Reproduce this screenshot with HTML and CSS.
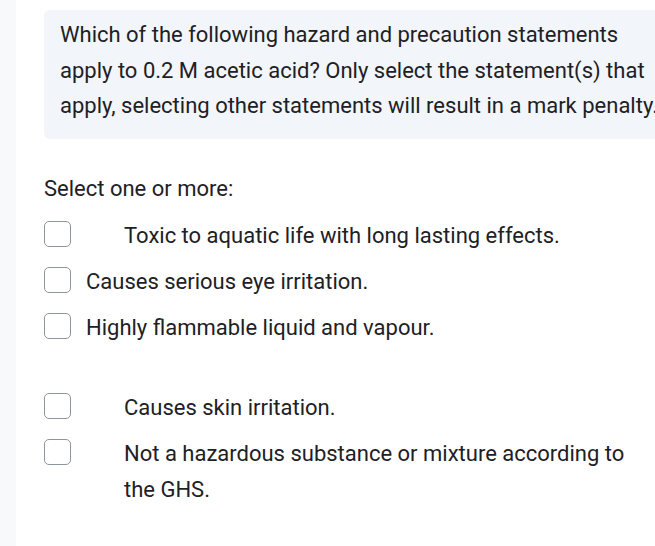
FILE: index.html
```html
<!DOCTYPE html>
<html lang="en">
<head>
<meta charset="utf-8">
<title>Question</title>
<link rel="stylesheet" href="styles.css">
</head>
<body>
<div class="page">
  <aside class="rail"></aside>
  <main class="content">
    <div class="qtext">
      <p>Which of the following hazard and precaution statements apply to 0.2 M acetic acid? Only select the statement(s) that apply, selecting other statements will result in a mark penalty.</p>
    </div>
    <div class="prompt">Select one or more:</div>
    <div class="answers">
      <label class="option">
        <span class="box"></span>
        <span class="label indent">Toxic to aquatic life with long lasting effects.</span>
      </label>
      <label class="option">
        <span class="box"></span>
        <span class="label">Causes serious eye irritation.</span>
      </label>
      <label class="option">
        <span class="box"></span>
        <span class="label">Highly flammable liquid and vapour.</span>
      </label>
      <label class="option spaced">
        <span class="box"></span>
        <span class="label indent">Causes skin irritation.</span>
      </label>
      <label class="option">
        <span class="box"></span>
        <span class="label indent">Not a hazardous substance or mixture according to the GHS.</span>
      </label>
    </div>
  </main>
</div>
</body>
</html>
```

FILE: styles.css
```css
html, body {
  margin: 0;
  padding: 0;
  background: #ffffff;
  overflow: hidden;
}

.page {
  display: flex;
  min-height: 546px;
  font-family: Roboto, "Liberation Sans", Arial, sans-serif;
  font-size: 22px;
  color: #1d2125;
}

.rail {
  width: 16px;
  flex: none;
  background: #f8f9fa;
}

.content {
  flex: none;
  width: 700px;
  padding: 10px 0 0 28px;
}

.qtext {
  width: 605px;
  background: #f2f5f9;
  border-radius: 6px;
  padding: 7px 60px 15px 16px;
}

.qtext p {
  margin: 0;
  line-height: 35.5px;
}

.prompt {
  margin-top: 32px;
  line-height: 36px;
}

.answers {
  margin-top: 11px;
  display: flex;
  flex-direction: column;
  gap: 10px;
}

.option {
  display: flex;
  align-items: flex-start;
  gap: 15px;
  width: 600px;
}

.option.spaced {
  margin-top: 34px;
}

.box {
  flex: none;
  width: 25px;
  height: 24px;
  margin-top: 3px;
  border: 1.5px solid #8f959e;
  border-radius: 5px;
  background: #fff;
}

.label {
  line-height: 36px;
}

.label.indent {
  padding-left: 38px;
  width: 515px;
}
```
